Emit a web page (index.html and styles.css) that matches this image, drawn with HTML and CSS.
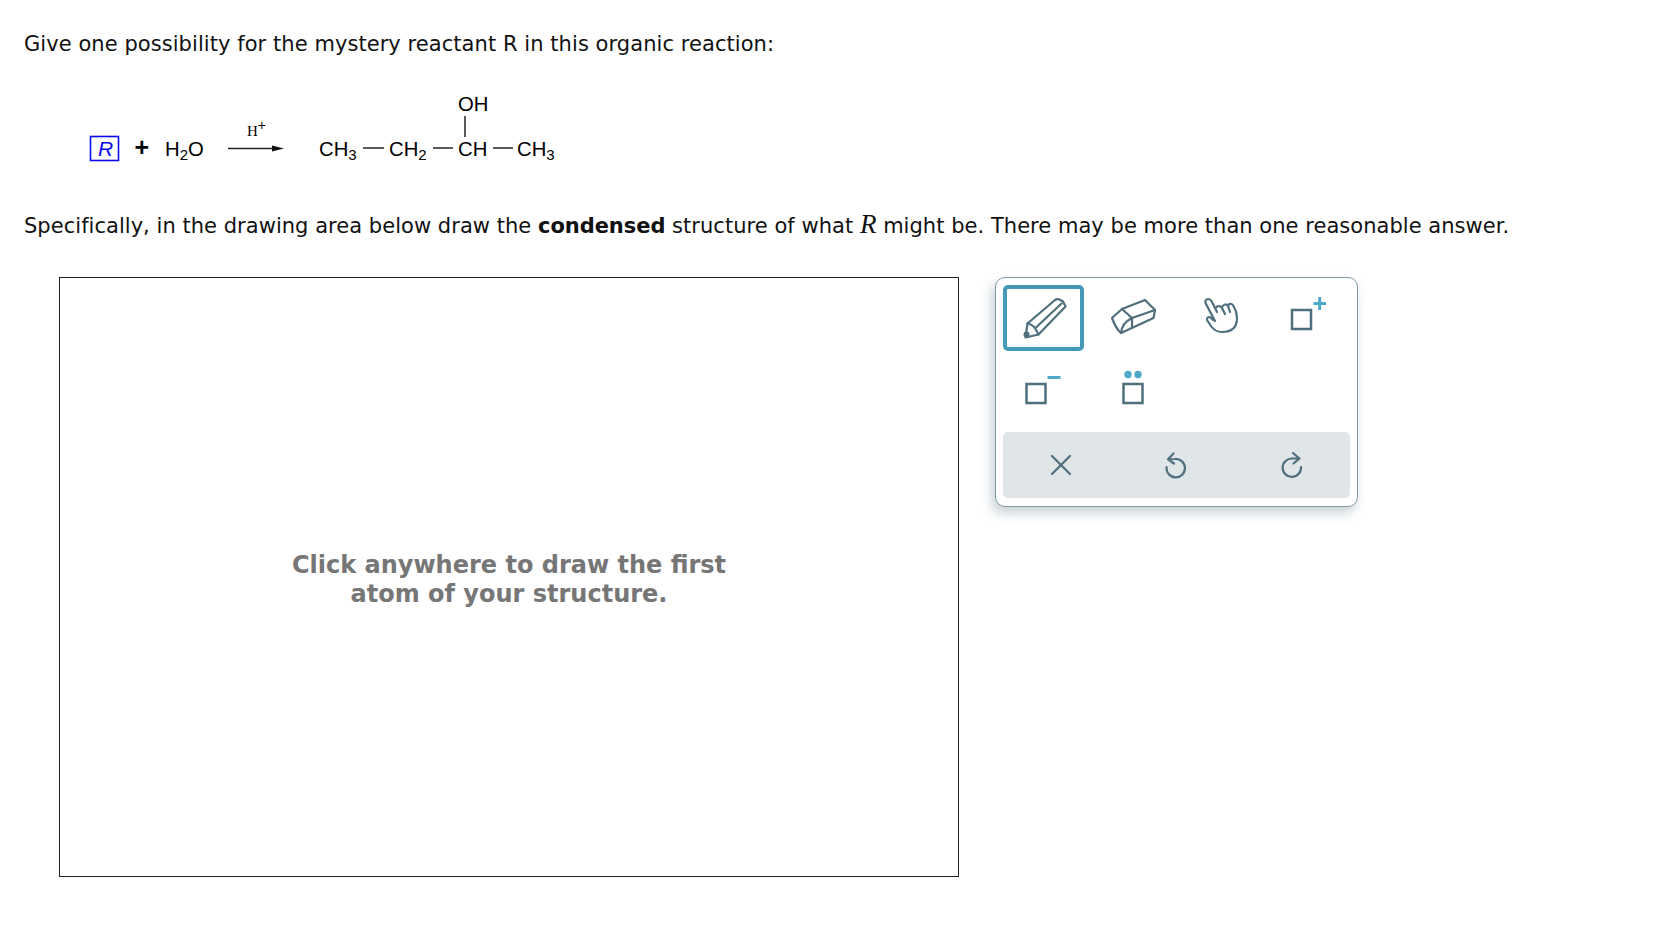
FILE: index.html
```html
<!DOCTYPE html>
<html>
  <head>
    <meta charset="utf-8">
    <title>Organic reaction</title>
    <link rel="stylesheet" href="styles.css">
  </head>
  <body>
    <p class="question first">Give one possibility for the mystery reactant R in this organic reaction:</p>

    <svg class="reaction" width="600" height="90" viewBox="0 0 600 90">
      <!-- coordinates: page x, page y minus 85 -->
      <rect class="r-box" x="90.5" y="51.5" width="28" height="24"/>
      <text class="r-label" x="98" y="71">R</text>
      <text class="plus" x="134.5" y="71">+</text>
      <text class="chem" x="165" y="71">H<tspan class="sub" dy="4">2</tspan><tspan dy="-4">O</tspan></text>
      <text class="catalyst" x="247" y="51">H<tspan class="sup" dy="-6">+</tspan></text>
      <line class="bond" x1="228" y1="63.5" x2="276" y2="63.5"/>
      <polygon class="head" points="272,60.5 284,63.5 272,66.5"/>

      <text class="chem" x="319" y="71">CH<tspan class="sub" dy="4">3</tspan></text>
      <line class="bond" x1="363" y1="63" x2="384" y2="63"/>
      <text class="chem" x="389" y="71">CH<tspan class="sub" dy="4">2</tspan></text>
      <line class="bond" x1="433" y1="63" x2="453" y2="63"/>
      <text class="chem" x="458" y="71">CH</text>
      <line class="bond" x1="493" y1="63" x2="513" y2="63"/>
      <text class="chem" x="517" y="71">CH<tspan class="sub" dy="4">3</tspan></text>
      <text class="chem" x="458" y="26">OH</text>
      <line class="bond" x1="465" y1="31" x2="465" y2="52"/>
    </svg>

    <p class="question second">Specifically, in the drawing area below draw the <b>condensed</b> structure of what <i class="var">R</i> might be. There may be more than one reasonable answer.</p>

    <div class="workspace">
      <div class="canvas">
        <div class="hint">Click anywhere to draw the first<br>atom of your structure.</div>
      </div>

      <div class="toolbox">
        <div class="tools">
          <div class="tool on">
            <svg viewBox="0 0 81 66">
              <path class="ic" d="M24.5 38.5 L52 15 Q54 13.5 56.5 14.5 L60 16.5 L62.5 21.5 L35.5 49.5 L22.5 52.5 Z"/>
              <path class="ic" d="M33.5 42 L58.5 18.5 M24.5 38.5 Q31 39 35.5 49.5"/>
              <circle class="ic-fill" cx="23.5" cy="49.5" r="3"/>
            </svg>
          </div>
          <div class="tool">
            <svg viewBox="0 0 81 66">
              <path class="ic" d="M22 33 L32 24 L55 15 L65 25 L63.5 33 L31 48 Q26 44 22 33 Z"/>
              <path class="ic" d="M32 24 L42 33 L65 25 M42 33 L42 42 M31 48 Q32 38 42 33"/>
            </svg>
          </div>
          <div class="tool">
            <svg viewBox="0 0 81 66">
              <path class="ic" d="M38 36 L28.5 18 Q28 14 31 14 Q33.5 14 35 17 L40 27"/>
              <path class="ic" d="M38.5 23 Q42 19 45 23 L48 29 M45 22 Q48 17.5 51 21 L53 27 M51 20 Q55 17 57 22 Q60 27 60 33 Q60 47 45 47 Q38 47 34 41 L30 35 Q29.5 32 33 32 L36 35"/>
            </svg>
          </div>
          <div class="tool">
            <svg viewBox="0 0 81 66">
              <rect class="box" x="29" y="25" width="19" height="19"/>
              <path class="accent" d="M50.5 18.5 H63 M56.7 12 V25"/>
            </svg>
          </div>
          <div class="tool">
            <svg viewBox="0 0 81 66">
              <rect class="box" x="23.5" y="25" width="19" height="19"/>
              <path class="accent" d="M44.5 18.5 H57.5"/>
            </svg>
          </div>
          <div class="tool">
            <svg viewBox="0 0 81 66">
              <rect class="box" x="33.5" y="25" width="19" height="19"/>
              <circle class="dot" cx="38" cy="15.5" r="3.7"/>
              <circle class="dot" cx="48" cy="15.5" r="3.7"/>
            </svg>
          </div>
        </div>

        <div class="actions">
          <svg viewBox="0 0 32 32">
            <path class="ic" d="M7 7 L25 25 M25 7 L7 25"/>
          </svg>
          <svg viewBox="0 0 32 32">
            <path class="ic" d="M13.5 4.5 L8 10.3 L14 14.5 M8 10.3 L15 10 A9.2 9.2 0 1 1 6.6 18"/>
          </svg>
          <svg viewBox="0 0 32 32">
            <path class="ic" d="M17 4 L23.5 9.5 L17.5 14.5 M23.5 9.5 L16 9.5 A9.2 9.2 0 1 0 25 18"/>
          </svg>
        </div>
      </div>
    </div>
  </body>
</html>
```

FILE: styles.css
```css
*{
  margin:0;
  padding:0;
  box-sizing:border-box;
}
body{
  padding:30px 24px 0 24px;
  font-family:"DejaVu Sans",Verdana,sans-serif;
  font-size:21px;
  color:#111;
  background:#fff;
}
.question{
  line-height:28px;
  white-space:nowrap;
  letter-spacing:.06px;
}
.second{
  margin-top:37px;
  letter-spacing:.035px;
}
.second b{
  letter-spacing:-.05px;
}
.var{
  font-family:"Liberation Serif",serif;
  font-size:27px;
  line-height:20px;
}
.reaction{
  display:block;
  margin:27px 0 0 -24px;
}
.chem{
  font-family:"Liberation Sans",Arial,sans-serif;
  font-size:20.3px;
  fill:#000;
}
.plus{
  font-family:"Liberation Sans",Arial,sans-serif;
  font-size:25px;
  font-weight:bold;
  fill:#000;
}
.sub{
  font-size:15px;
}
.sup{
  font-family:"Liberation Sans",Arial,sans-serif;
  font-size:14px;
}
.catalyst{
  font-family:"Liberation Serif",serif;
  font-size:15px;
  fill:#000;
}
.bond{
  stroke:#222;
  stroke-width:1.5;
}
.head{
  fill:#111;
}
.r-box{
  fill:none;
  stroke:#0a0aee;
  stroke-width:1.6;
}
.r-label{
  font-family:"Liberation Sans",Arial,sans-serif;
  font-style:italic;
  font-size:21px;
  fill:#0a0aee;
}

.workspace{
  display:flex;
  align-items:flex-start;
  gap:36px;
  margin:37px 0 0 35px;
}
.canvas{
  width:900px;
  height:600px;
  border:1px solid #222;
  display:flex;
  align-items:center;
  justify-content:center;
  padding-top:6px;
}
.hint{
  font-size:24px;
  line-height:29px;
  font-weight:bold;
  text-align:center;
  color:#767676;
}

.toolbox{
  width:363px;
  height:230px;
  padding:7px;
  border:1px solid #7e9aa4;
  border-radius:10px;
  background:#fff;
  box-shadow:-3px 6px 12px rgba(80,110,125,.32);
}
.tools{
  display:grid;
  grid-template-columns:repeat(4,81px);
  grid-auto-rows:66px;
  column-gap:5.75px;
  row-gap:8px;
  height:140px;
}
.tool{
  border-radius:5px;
}
.tool svg{
  display:block;
  width:81px;
  height:66px;
}
.on{
  box-shadow:inset 0 0 0 4px #4499b5;
}
.actions{
  display:grid;
  grid-template-columns:repeat(3,1fr);
  justify-items:center;
  align-items:center;
  height:66px;
  margin-top:7px;
  border-radius:5px;
  background:#e0e5e8;
}
.actions svg{
  width:32px;
  height:32px;
}
.ic{
  fill:none;
  stroke:#4f6f7d;
  stroke-width:2.2;
  stroke-linejoin:round;
  stroke-linecap:round;
}
.ic-fill{
  fill:#4f6f7d;
}
.box{
  fill:none;
  stroke:#4f6f7d;
  stroke-width:2.5;
}
.accent{
  fill:none;
  stroke:#4ea8c8;
  stroke-width:3;
}
.dot{
  fill:#4ea8c8;
}
```
